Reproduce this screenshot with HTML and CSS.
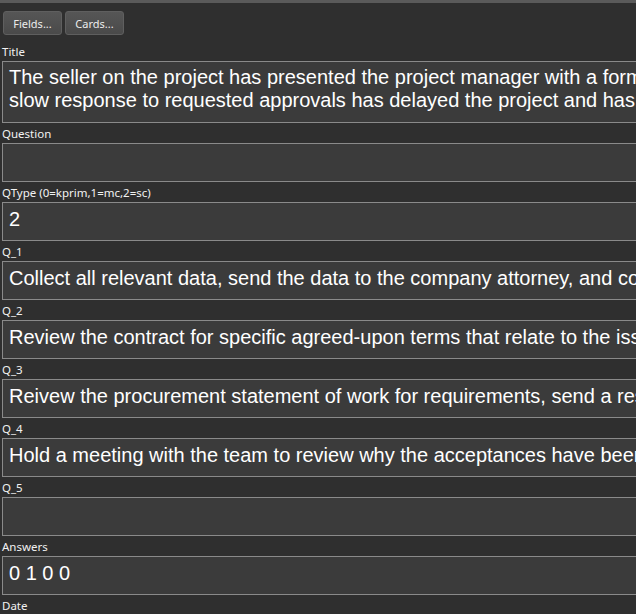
FILE: index.html
```html
<!DOCTYPE html>
<html lang="en">
<head>
    <meta charset="UTF-8">
    <meta name="viewport" content="width=device-width, initial-scale=1.0">
    <title>Card Editor</title>
    <link rel="stylesheet" href="styles.css">
</head>
<body>
    <div class="topo"></div>
    <div class="barra">
        <button class="botao">Fields...</button>
        <button class="botao">Cards...</button>
    </div>
    <div class="formulario">
        <div class="rotulo">Title</div>
        <div class="campo campo-alto">
            <div class="linha">The seller on the project has presented the project manager with a formal complaint. The buyer's</div>
            <div class="linha">slow response to requested approvals has delayed the project and has caused the seller unplanned expenses.</div>
        </div>

        <div class="rotulo">Question</div>
        <div class="campo"></div>

        <div class="rotulo">QType (0=kprim,1=mc,2=sc)</div>
        <div class="campo"><div class="linha">2</div></div>

        <div class="rotulo">Q_1</div>
        <div class="campo"><div class="linha">Collect all relevant data, send the data to the company attorney, and consult with legal counsel.</div></div>

        <div class="rotulo">Q_2</div>
        <div class="campo"><div class="linha">Review the contract for specific agreed-upon terms that relate to the issue raised by the seller.</div></div>

        <div class="rotulo">Q_3</div>
        <div class="campo"><div class="linha">Reivew the procurement statement of work for requirements, send a response to the seller.</div></div>

        <div class="rotulo">Q_4</div>
        <div class="campo"><div class="linha">Hold a meeting with the team to review why the acceptances have been delayed.</div></div>

        <div class="rotulo">Q_5</div>
        <div class="campo"></div>

        <div class="rotulo">Answers</div>
        <div class="campo"><div class="linha">0 1 0 0</div></div>

        <div class="rotulo">Date</div>
        <div class="campo"></div>
    </div>
</body>
</html>
```

FILE: styles.css
```css
* {
    margin: 0;
    padding: 0;
    box-sizing: border-box;
}

body {
    background-color: #2f2f2f;
    color: #f2f2f2;
    font-family: "Noto Sans", Arial, sans-serif;
    overflow: hidden;
    height: 100vh;
}

.topo {
    height: 3px;
    background-color: #5a5a5a;
}

.barra {
    display: flex;
    gap: 3px;
    padding: 8px 3px 6px 3px;
}

.botao {
    width: 59px;
    height: 24px;
    background: linear-gradient(#565656, #4a4a4a);
    border: 1px solid #5f5f5f;
    border-radius: 3px;
    color: #ececec;
    font-family: "Noto Sans", Arial, sans-serif;
    font-size: 11px;
}

.formulario {
    padding-left: 2px;
    width: 1000px;
}

.rotulo {
    height: 20px;
    padding-top: 3px;
    line-height: 16px;
    font-size: 11.5px;
    white-space: nowrap;
}

.campo {
    height: 39px;
    background-color: #3b3b3b;
    border: 1px solid #8a8a8a;
    padding: 5px 0 0 6px;
    font-family: "Liberation Sans", Arial, sans-serif;
    font-size: 20px;
    line-height: 23px;
    color: #ffffff;
    overflow: hidden;
}

.campo-alto {
    height: 62px;
    padding-top: 4px;
}

.linha {
    white-space: nowrap;
}
```
